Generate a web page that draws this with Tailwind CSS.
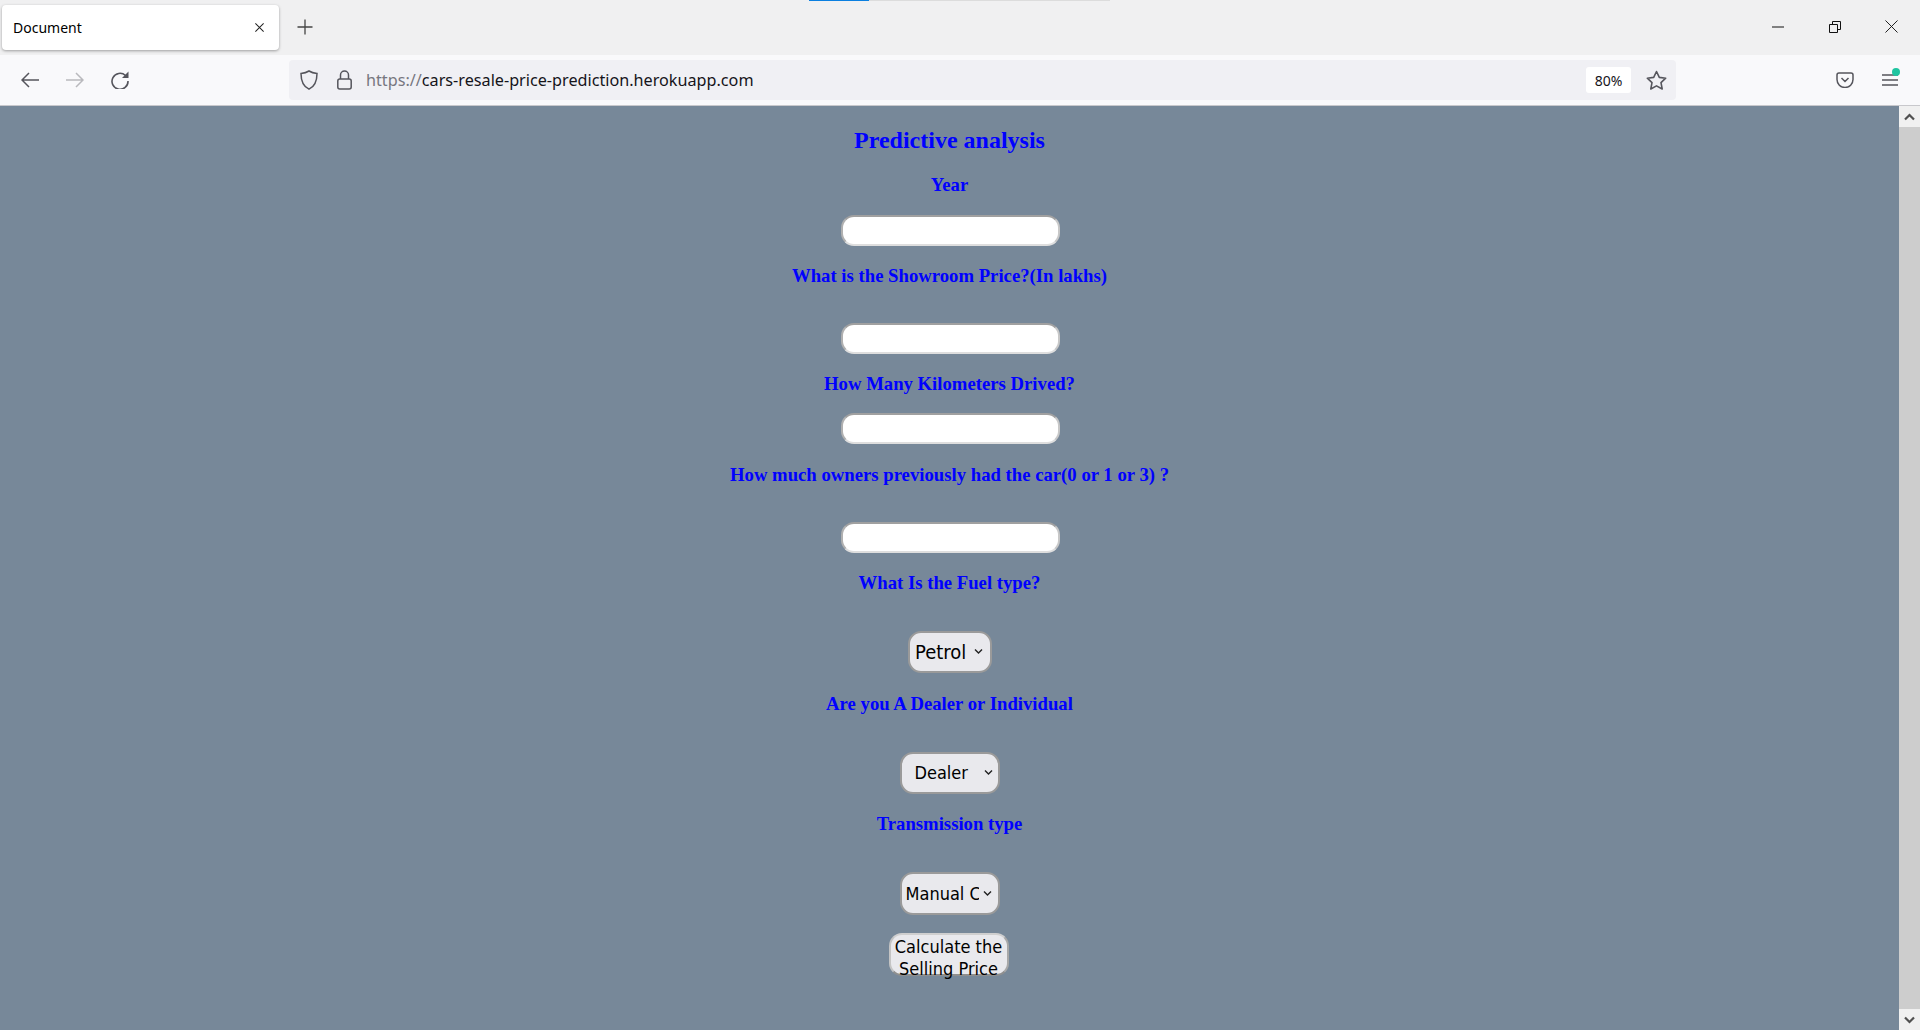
<!DOCTYPE html>
<html lang="en">

<head>
  <meta charset="UTF-8">
  <title>Document</title>
  <script src="https://cdn.jsdelivr.net/npm/@tailwindcss/browser@4"></script>
</head>

<body class="h-[1030px] overflow-hidden flex flex-col bg-[#778899] font-['Noto_Sans',sans-serif]">
  <!-- tab strip -->
  <div class="relative h-[55px] shrink-0 flex items-start bg-[#f0f0f1] pl-[2px] pt-[5px]">
    <div class="absolute top-0 left-[809px] h-[1px] w-[60px] bg-[#0a7fe0]"></div>
    <div class="absolute top-0 left-[869px] h-[1px] w-[241px] bg-[#dcdcdc]"></div>
    <div class="h-[45px] w-[277px] px-[11px] flex items-center justify-between bg-white rounded-[4px] shadow-[0_1px_3px_rgba(0,0,0,0.35)]">
      <span class="text-[14px] text-black">Document</span>
      <svg class="w-[11px] h-[11px] mr-[3px]" viewBox="0 0 12 12" fill="none" stroke="#222" stroke-width="1.1">
        <path d="M1.5 1.5l9 9M10.5 1.5l-9 9" />
      </svg>
    </div>
    <svg class="w-[16px] h-[16px] ml-[18px] mt-[14px]" viewBox="0 0 16 16" fill="none" stroke="#444" stroke-width="1.3">
      <path d="M8 0.5v15M0.5 8h15" />
    </svg>
    <!-- window buttons -->
    <div class="ml-auto flex items-center h-[43px] pr-[22px]">
      <svg class="w-[12px] h-[12px]" viewBox="0 0 12 12" stroke="#111" stroke-width="1"><path d="M0 6h12" /></svg>
      <svg class="w-[12px] h-[12px] ml-[45px]" viewBox="0 0 12 12" fill="none" stroke="#111" stroke-width="1">
        <path d="M0.5 3.5h8v8h-8zM3.5 3.5v-3h8v8h-3" />
      </svg>
      <svg class="w-[13px] h-[13px] ml-[44px]" viewBox="0 0 14 14" fill="none" stroke="#111" stroke-width="1"><path d="M0.5 0.5l13 13M13.5 0.5l-13 13" /></svg>
    </div>
  </div>

  <!-- nav bar -->
  <div class="shrink-0 flex items-center bg-[#f9f9fb] border-b border-[#c8c8cc] box-content h-[50px]">
    <div class="flex items-center pl-[21px] gap-[27px] w-[289px] shrink-0">
      <svg class="w-[18px] h-[16px]" viewBox="0 0 18 16" fill="none" stroke="#55555c" stroke-width="1.5"><path d="M18 8H1.500M8 1L1 8l7 7" /></svg>
      <svg class="w-[18px] h-[16px]" viewBox="0 0 18 16" fill="none" stroke="#b9b9bd" stroke-width="1.5"><path d="M0 8h16.500M10 1l7 7-7 7" /></svg>
      <svg class="w-[18px] h-[18px]" viewBox="0 0 18 18" fill="none" stroke="#55555c" stroke-width="1.6">
        <path d="M14.500 4.500A8 8 0 1 0 17 10" />
        <path d="M17.500 0.500v6.500h-6.500z" fill="#55555c" stroke="none" />
      </svg>
    </div>
    <div class="w-[1387px] h-[40px] flex items-center rounded-[4px] bg-[#f0f0f4] pl-[11px] pr-[9px]">
      <svg class="w-[18px] h-[20px]" viewBox="0 0 18 20" fill="none" stroke="#55555c" stroke-width="1.500"><path d="M9 1c2.300 1.400 4.800 2.100 8 2.400 0 7-1.500 12.600-8 15.800C2.500 16 1 10.400 1 3.400 4.200 3.100 6.700 2.400 9 1z" /></svg>
      <svg class="w-[15px] h-[20px] ml-[19px]" viewBox="0 0 15 20" fill="none" stroke="#55555c" stroke-width="1.500">
        <path d="M3.500 9V5a4 4 0 0 1 8 0v4" />
        <rect x="0.800" y="9" width="13.400" height="10" rx="2" />
      </svg>
      <span class="ml-[14px] text-[16.200px] text-[#77777f]">https://<span class="text-[#15141a]">cars-resale-price-prediction.herokuapp.com</span></span>
      <span class="ml-auto w-[45px] h-[26px] flex items-center justify-center rounded-[3px] bg-white text-[14px] text-[#15141a]">80%</span>
      <svg class="w-[21px] h-[21px] ml-[15px]" viewBox="0 0 21 21" fill="none" stroke="#55555c" stroke-width="1.6" stroke-linejoin="round"><path d="M10.500 1.500l2.800 5.900 6.400.8-4.700 4.400 1.200 6.400-5.700-3.100-5.700 3.100 1.200-6.400L1.300 8.200l6.400-.8z" /></svg>
    </div>
    <svg class="w-[18px] h-[16px] ml-[160px]" viewBox="0 0 18 16" fill="none" stroke="#55555c" stroke-width="1.5"><path d="M1 3a2 2 0 0 1 2-2h12a2 2 0 0 1 2 2v4.500a8 8 0 0 1-16 0zM5.500 6L9 9.500 12.500 6" /></svg>
    <div class="relative ml-[28px]">
      <svg class="block w-[16px] h-[12px]" viewBox="0 0 16 12" stroke="#55555c" stroke-width="1.4"><path d="M0 1h16M0 6h16M0 11h16" /></svg>
      <div class="absolute -top-[6px] -right-[2px] w-[8px] h-[8px] rounded-full bg-[#1fc4a0]"></div>
    </div>
  </div>

  <!-- page -->
  <div class="flex-1 flex min-h-0">
    <main class="flex-1 flex flex-col items-center font-['Liberation_Serif',serif] font-bold text-[#0000ff] text-[18.720px] leading-[20px]">
      <h1 class="mt-[21px] text-[24px] leading-[27px]">Predictive analysis</h1>
      <h2 class="mt-[21px]">Year</h2>
      <input type="text" class="mt-[20px] ml-[2px] w-[219px] h-[31px] rounded-[13px] bg-white border-2 border-t-[#a0a0a0] border-l-[#b0b0b0] border-r-[#c8c8c8] border-b-[#dedede]">
      <h2 class="mt-[20px]">What is the Showroom Price?(In lakhs)</h2>
      <input type="text" class="mt-[37px] ml-[2px] w-[219px] h-[31px] rounded-[13px] bg-white border-2 border-t-[#a0a0a0] border-l-[#b0b0b0] border-r-[#c8c8c8] border-b-[#dedede]">
      <h2 class="mt-[20px]">How Many Kilometers Drived?</h2>
      <input type="text" class="mt-[19px] ml-[2px] w-[219px] h-[31px] rounded-[13px] bg-white border-2 border-t-[#a0a0a0] border-l-[#b0b0b0] border-r-[#c8c8c8] border-b-[#dedede]">
      <h2 class="mt-[21px]">How much owners previously had the car(0 or 1 or 3) ?</h2>
      <input type="text" class="mt-[37px] ml-[2px] w-[219px] h-[31px] rounded-[13px] bg-white border-2 border-t-[#a0a0a0] border-l-[#b0b0b0] border-r-[#c8c8c8] border-b-[#dedede]">
      <h2 class="mt-[20px]">What Is the Fuel type?</h2>
      <div class="relative mt-[38px] ml-[1px]">
        <select class="block appearance-none w-[84px] h-[42px] pl-[5px] rounded-[13px] bg-[#e9e9ed] border-2 border-[#9a9a9a] font-['DejaVu_Sans',sans-serif] [font-stretch:condensed] font-normal text-[20px] text-black"><option>Petrol</option></select>
        <svg class="absolute top-[17px] right-[9px] w-[9px] h-[7px]" viewBox="0 0 9 7" fill="none" stroke="#222" stroke-width="1.400"><path d="M1 1.500l3.500 3.500L8 1.500" /></svg>
      </div>
      <h2 class="mt-[21px]">Are you A Dealer or Individual</h2>
      <div class="relative mt-[38px]">
        <select class="block appearance-none w-[100px] h-[42px] pl-[13px] rounded-[13px] bg-[#e9e9ed] border-2 border-[#9a9a9a] font-['DejaVu_Sans',sans-serif] [font-stretch:condensed] font-normal text-[18px] text-black"><option>Dealer</option></select>
        <svg class="absolute top-[17px] right-[7px] w-[9px] h-[7px]" viewBox="0 0 9 7" fill="none" stroke="#222" stroke-width="1.400"><path d="M1 1.500l3.500 3.500L8 1.500" /></svg>
      </div>
      <h2 class="mt-[20px]">Transmission type</h2>
      <div class="relative mt-[38px]">
        <select class="block appearance-none w-[100px] h-[43px] pl-[4px] pr-[19px] rounded-[13px] bg-[#e9e9ed] border-2 border-[#9a9a9a] font-['DejaVu_Sans',sans-serif] [font-stretch:condensed] font-normal text-[18px] text-black"><option>Manual Car</option></select>
        <svg class="absolute top-[18px] right-[8px] w-[9px] h-[7px]" viewBox="0 0 9 7" fill="none" stroke="#222" stroke-width="1.400"><path d="M1 1.500l3.500 3.500L8 1.500" /></svg>
      </div>
      <button class="mt-[18px] mr-[2px] w-[120px] h-[43px] rounded-[13px] bg-[#e9e9ed] border-2 border-t-[#cfcfcf] border-l-[#c4c4c4] border-r-[#a8a8a8] border-b-[#8f8f8f] font-['DejaVu_Sans',sans-serif] [font-stretch:condensed] font-normal text-[18px] leading-[22px] text-black flex flex-col items-center pt-[1px]"><span>Calculate the</span><span>Selling Price</span></button>
    </main>
    <!-- scrollbar -->
    <div class="w-[21px] shrink-0 flex flex-col bg-[#cdcdcd]">
      <div class="h-[21px] flex items-center justify-center bg-[#f0f0f0]">
        <svg class="w-[11px] h-[8px]" viewBox="0 0 11 8" fill="none" stroke="#505050" stroke-width="2.200"><path d="M1 6.500l4.500-4.500L10 6.500" /></svg>
      </div>
      <div class="mt-auto h-[21px] flex items-center justify-center bg-[#f0f0f0]">
        <svg class="w-[11px] h-[8px]" viewBox="0 0 11 8" fill="none" stroke="#505050" stroke-width="2.200"><path d="M1 1.500L5.500 6 10 1.500" /></svg>
      </div>
    </div>
  </div>
</body>

</html>
